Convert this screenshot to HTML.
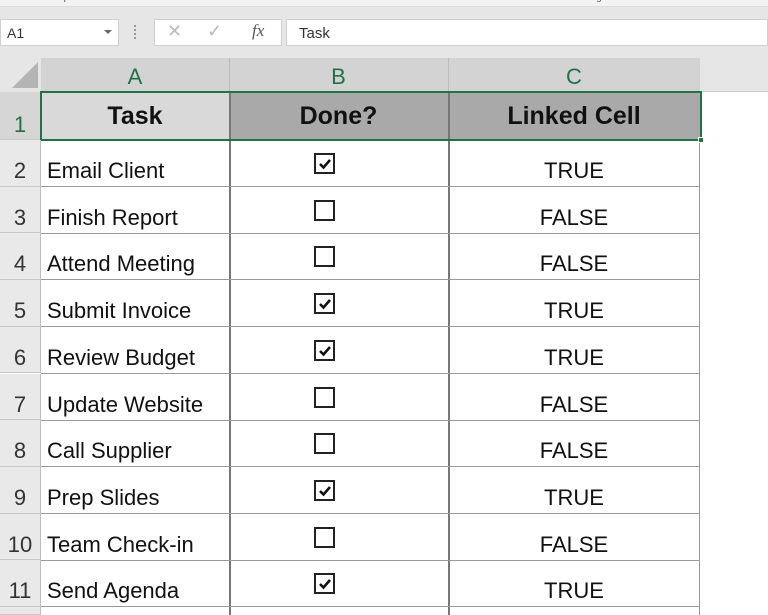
<!DOCTYPE html>
<html><head><style>
*{margin:0;padding:0;box-sizing:border-box}
html,body{width:768px;height:615px;overflow:hidden}
body{background:#fff;font-family:"Liberation Sans",sans-serif;position:relative}
.a{position:absolute}
.rh{position:absolute;left:0;width:41px;background:#e9e9e9;color:#333;font-size:22px;text-align:center;border-bottom:1px solid #c8c8c8;border-right:1px solid #bdbdbd}
.cell{position:absolute;font-size:22px;color:#111;white-space:nowrap}
.hl{position:absolute;left:41px;width:659px;height:1px;background:#9a9a9a}
.vl{position:absolute;top:92px;width:2px;height:523px;background:#777}
.cb{position:absolute;left:314px;width:21px;height:21px;border:2px solid #222;background:#fff}
.cb svg{position:absolute;left:2px;top:2px}
</style></head><body>
<div class="a" style="left:0;top:0;width:768px;height:7px;background:#f3f3f3;border-bottom:1px solid #dcdcdc;font-size:10px;color:#555;overflow:hidden"><span class="a" style="left:52px;top:-8px">Clipboard</span><span class="a" style="left:300px;top:-8px">Font</span><span class="a" style="left:585px;top:-8px">Alignment</span></div>
<div class="a" style="left:0;top:7px;width:768px;height:51px;background:#e6e6e6"></div>
<div class="a" style="left:0;top:19px;width:119px;height:27px;background:#fff;border:1px solid #d0d0d0;font-size:14px;color:#333;padding:5px 0 0 6px">A1<span class="a" style="left:103px;top:10px;border-left:4px solid transparent;border-right:4px solid transparent;border-top:4px solid #666"></span></div>
<div class="a" style="left:134px;top:25px;width:3px;height:14px;border-left:2px dotted #999"></div>
<div class="a" style="left:154px;top:19px;width:128px;height:27px;background:#fff;border:1px solid #d0d0d0;color:#bbb;font-size:18px"><span class="a" style="left:12px;top:1px">✕</span><span class="a" style="left:52px;top:1px">✓</span><span class="a" style="left:97px;top:1px;color:#555;font-family:'Liberation Serif',serif;font-style:italic;font-size:17px">fx</span></div>
<div class="a" style="left:286px;top:19px;width:482px;height:27px;background:#fff;border:1px solid #d0d0d0;font-size:15px;color:#333;padding:5px 0 0 12px">Task</div>
<div class="a" style="left:0;top:58px;width:700px;height:34px;background:#d3d3d3"></div>
<div class="a" style="left:700px;top:58px;width:68px;height:34px;background:#e6e6e6;border-bottom:1px solid #ccc"></div>
<div class="a" style="left:0;top:58px;width:41px;height:34px;background:#e6e6e6"></div>
<div class="a" style="left:12px;top:62px;width:0;height:0;border-left:26px solid transparent;border-bottom:26px solid #b4b4b4"></div>
<div class="a" style="left:229px;top:58px;width:1px;height:34px;background:#bbb"></div>
<div class="a" style="left:448px;top:58px;width:1px;height:34px;background:#bbb"></div>
<div class="a" style="left:41px;top:64px;width:188px;text-align:center;font-size:22px;color:#217346">A</div>
<div class="a" style="left:229px;top:64px;width:219px;text-align:center;font-size:22px;color:#217346">B</div>
<div class="a" style="left:448px;top:64px;width:252px;text-align:center;font-size:22px;color:#217346">C</div>
<div class="a" style="left:41px;top:92px;width:188px;height:48px;background:#d9d9d9"></div>
<div class="a" style="left:229px;top:92px;width:471px;height:48px;background:#a9a9a9"></div>
<div class="cell" style="left:41px;top:102px;width:188px;text-align:center;font-weight:bold;font-size:25px">Task</div>
<div class="cell" style="left:229px;top:102px;width:219px;text-align:center;font-weight:bold;font-size:25px">Done?</div>
<div class="cell" style="left:448px;top:102px;width:252px;text-align:center;font-weight:bold;font-size:25px">Linked Cell</div>
<div class="rh" style="top:92px;height:48px;background:#d6d6d6;color:#217346;padding-top:20px">1</div>
<div class="vl" style="left:229px"></div><div class="vl" style="left:448px"></div><div class="vl" style="left:699px;width:1px;top:140px;height:475px;background:#999"></div>
<div class="a" style="left:40px;top:91px;width:662px;height:50px;border:2px solid #217346"></div>
<div class="a" style="left:698px;top:137px;width:6px;height:6px;background:#217346;border:1px solid #fff"></div>
<div id="rows"></div>
<script>
var d=[["Email Client",1],["Finish Report",0],["Attend Meeting",0],["Submit Invoice",1],["Review Budget",1],["Update Website",0],["Call Supplier",0],["Prep Slides",1],["Team Check-in",0],["Send Agenda",1]];
var h="";
for(var i=0;i<d.length;i++){var t=140+i*46.7;
h+='<div class="rh" style="top:'+t+'px;height:46.7px;padding-top:18px">'+(i+2)+'</div>';
h+='<div class="hl" style="top:'+(t+46)+'px"></div>';
h+='<div class="cell" style="left:47px;top:'+(t+18)+'px">'+d[i][0]+'</div>';
h+='<div class="cb" style="top:'+(t+13)+'px">'+(d[i][1]?'<svg width="14" height="14" viewBox="0 0 14 14"><path d="M2 7 L5.5 10.5 L12 3" stroke="#111" stroke-width="2.6" fill="none"/></svg>':'')+'</div>';
h+='<div class="cell" style="left:448px;width:252px;text-align:center;top:'+(t+18)+'px">'+(d[i][1]?'TRUE':'FALSE')+'</div>';}
h+='<div class="rh" style="top:607px;height:8px"></div>';
document.getElementById('rows').innerHTML=h;
</script>
</body></html>
